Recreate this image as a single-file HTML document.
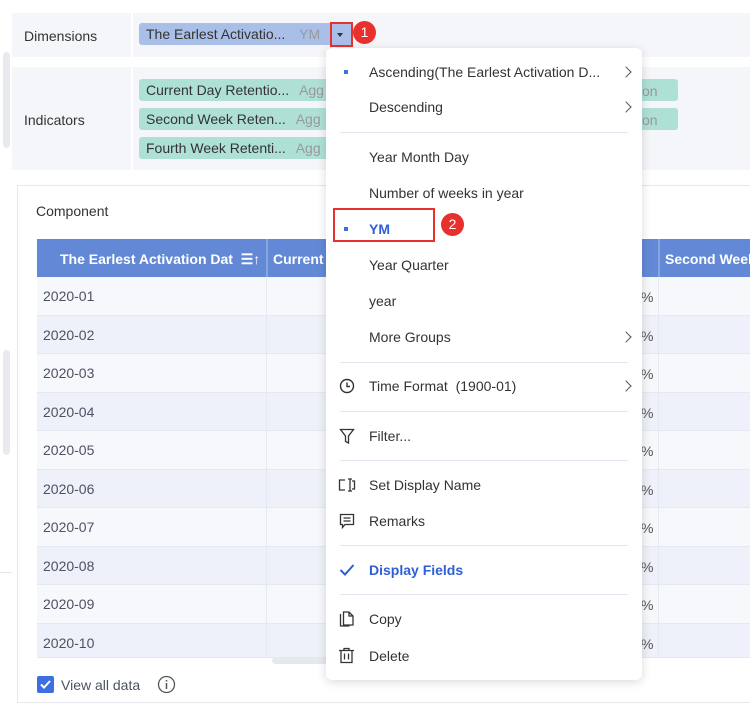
<!DOCTYPE html>
<html><head><meta charset="utf-8"><style>
*{box-sizing:border-box;margin:0;padding:0}
body{width:750px;height:708px;background:#fff;font-family:"Liberation Sans",Arial,sans-serif;font-size:14px;color:#333;position:relative;overflow:hidden}
.a{position:absolute}
.chip{position:absolute;height:22px;line-height:22px;padding-left:7px;font-size:14px;color:#333;border-radius:3px}
.g{color:#999}
.row{position:absolute;left:37px;width:713px;height:38.5px;line-height:38px;padding-left:6px;color:#4b5262;border-bottom:1px solid #e4e8f2}
.mi{position:absolute;left:369px;font-size:14px;color:#333;line-height:16px}
.sep{position:absolute;left:340px;width:288px;height:1px;background:#e3e6ee}
.chev{position:absolute;left:622px;width:8px;height:8px;border-right:1.3px solid #555;border-top:1.3px solid #555;transform:rotate(45deg)}
.badge{position:absolute;width:23px;height:23px;border-radius:50%;background:#e8302c;color:#fff;text-align:center;line-height:23px;font-size:14px}
.pc{position:absolute;left:641px;color:#555}
</style></head><body>
<div class="a" style="left:12px;top:13px;width:738px;height:44px;background:#f5f6fa"></div>
<div class="a" style="left:131px;top:13px;width:2px;height:44px;background:#fff"></div>
<div class="a" style="left:24px;top:28px">Dimensions</div>
<div class="chip" style="left:139px;top:23px;width:213px;background:#a9bfe8">The Earlest Activatio... <span class="g" style="margin-left:10px">YM</span></div>
<div class="a" style="left:330px;top:22px;width:23px;height:25px;border:2px solid #e8302c"></div>
<div class="a" style="left:337px;top:33px;width:0;height:0;border-left:3px solid transparent;border-right:3px solid transparent;border-top:4px solid #333"></div>
<div class="badge" style="left:353px;top:21px">1</div>
<div class="a" style="left:12px;top:67px;width:738px;height:103px;background:#f5f6fa"></div>
<div class="a" style="left:131px;top:67px;width:2px;height:103px;background:#fff"></div>
<div class="a" style="left:24px;top:112px">Indicators</div>
<div class="chip" style="left:139px;top:79px;width:539px;background:#aee0d6">Current Day Retentio... <span class="g" style="margin-left:6px">Agg</span></div>
<div class="chip" style="left:139px;top:108px;width:539px;background:#aee0d6">Second Week Reten... <span class="g" style="margin-left:6px">Agg</span></div>
<div class="chip" style="left:139px;top:137px;width:400px;background:#aee0d6">Fourth Week Retenti... <span class="g" style="margin-left:6px">Agg</span></div>
<div class="a g" style="left:642px;top:83px">on</div>
<div class="a g" style="left:642px;top:112px">on</div>
<div class="a" style="left:3px;top:52px;width:7px;height:96px;border-radius:4px;background:#e8eaef"></div>
<div class="a" style="left:3px;top:350px;width:7px;height:105px;border-radius:4px;background:#e8eaef"></div>
<div class="a" style="left:0;top:572px;width:12px;height:1px;background:#e3e6ee"></div>
<div class="a" style="left:17px;top:185px;width:740px;height:518px;border:1px solid #e6e8ee"></div>
<div class="a" style="left:36px;top:203px">Component</div>
<div class="a" style="left:37px;top:239px;width:713px;height:38px;background:#6389d6"></div>
<div class="a" style="left:266px;top:239px;width:2px;height:38px;background:#8aa6e2"></div>
<div class="a" style="left:658px;top:239px;width:2px;height:38px;background:#8aa6e2"></div>
<div class="a" style="left:60px;top:251px;color:#fff;font-weight:bold">The Earlest Activation Dat &nbsp;☰↑</div>
<div class="a" style="left:273px;top:251px;color:#fff;font-weight:bold">Current</div>
<div class="a" style="left:665px;top:251px;color:#fff;font-weight:bold;white-space:nowrap">Second Week</div>
<div class="row" style="top:277px;background:#f7f8fc">2020-01</div>
<div class="row" style="top:315.5px;background:#eef1f9">2020-02</div>
<div class="row" style="top:354px;background:#f7f8fc">2020-03</div>
<div class="row" style="top:392.5px;background:#eef1f9">2020-04</div>
<div class="row" style="top:431px;background:#f7f8fc">2020-05</div>
<div class="row" style="top:469.5px;background:#eef1f9">2020-06</div>
<div class="row" style="top:508px;background:#f7f8fc">2020-07</div>
<div class="row" style="top:546.5px;background:#eef1f9">2020-08</div>
<div class="row" style="top:585px;background:#f7f8fc">2020-09</div>
<div class="row" style="top:623.5px;background:#eef1f9;height:34px">2020-10</div>
<div class="a" style="left:266px;top:277px;width:1px;height:380px;background:#e4e8f2"></div>
<div class="a" style="left:658px;top:277px;width:1px;height:380px;background:#e4e8f2"></div>
<div class="pc" style="top:289px">%</div><div class="pc" style="top:328px">%</div><div class="pc" style="top:366px">%</div><div class="pc" style="top:405px">%</div><div class="pc" style="top:443px">%</div><div class="pc" style="top:482px">%</div><div class="pc" style="top:520px">%</div><div class="pc" style="top:559px">%</div><div class="pc" style="top:597px">%</div><div class="pc" style="top:636px">%</div>
<div class="a" style="left:272px;top:657px;width:60px;height:7px;border-radius:4px;background:#e6e8ee"></div>
<div class="a" style="left:37px;top:676px;width:17px;height:17px;border-radius:2px;background:#3d6fe0"></div>
<svg class="a" style="left:37px;top:676px" width="17" height="17"><path d="M4 8.5l3 3 6-6.5" stroke="#fff" stroke-width="2" fill="none"/></svg>
<div class="a" style="left:61px;top:677px;color:#4b5262">View all data</div>
<svg class="a" style="left:157px;top:675px" width="19" height="19"><circle cx="9.5" cy="9.5" r="8" stroke="#555" stroke-width="1.3" fill="none"/><path d="M9.5 8v6M9.5 5v1.5" stroke="#555" stroke-width="1.5"/></svg>
<div class="a" style="left:326px;top:48px;width:316px;height:632px;background:#fff;border-radius:6px;box-shadow:0 2px 10px rgba(0,0,0,.15)"></div>
<div class="a" style="left:344px;top:70px;width:4px;height:4px;background:#3d6fe0"></div>
<div class="mi" style="top:64px">Ascending(The Earlest Activation D...</div><div class="chev" style="top:68px"></div>
<div class="mi" style="top:99px">Descending</div><div class="chev" style="top:103px"></div>
<div class="sep" style="top:132px"></div>
<div class="mi" style="top:149px">Year Month Day</div>
<div class="mi" style="top:185px">Number of weeks in year</div>
<div class="a" style="left:344px;top:227px;width:4px;height:4px;background:#3d6fe0"></div>
<div class="mi" style="top:221px;color:#2d5fd8;font-weight:bold">YM</div>
<div class="a" style="left:333px;top:208px;width:102px;height:34px;border:2px solid #e8302c"></div>
<div class="badge" style="left:441px;top:213px">2</div>
<div class="mi" style="top:257px">Year Quarter</div>
<div class="mi" style="top:293px">year</div>
<div class="mi" style="top:329px">More Groups</div><div class="chev" style="top:333px"></div>
<div class="sep" style="top:362px"></div>
<svg class="a" style="left:339px;top:378px" width="16" height="16"><circle cx="8" cy="8" r="6.5" stroke="#333" stroke-width="1.4" fill="none"/><path d="M8 4.5V8.5H11" stroke="#333" stroke-width="1.4" fill="none"/></svg>
<div class="mi" style="top:378px">Time Format &nbsp;(1900-01)</div><div class="chev" style="top:382px"></div>
<div class="sep" style="top:411px"></div>
<svg class="a" style="left:339px;top:428px" width="16" height="16"><path d="M1.5 1.5h13l-5 6.5v7l-3-1.5v-5.5z" stroke="#333" stroke-width="1.3" fill="none"/></svg>
<div class="mi" style="top:428px">Filter...</div>
<div class="sep" style="top:460px"></div>
<svg class="a" style="left:338px;top:477px" width="18" height="16"><path d="M7 3H1.5v10H7M10 2h4M10 14h4M12 2v12M14 4h2.5v8H14" stroke="#333" stroke-width="1.3" fill="none"/></svg>
<div class="mi" style="top:477px">Set Display Name</div>
<svg class="a" style="left:339px;top:513px" width="16" height="17"><path d="M1.5 1.5h13v10H6l-2.5 3v-3h-2z M4.5 5h7M4.5 8h7" stroke="#333" stroke-width="1.3" fill="none"/></svg>
<div class="mi" style="top:513px">Remarks</div>
<div class="sep" style="top:545px"></div>
<svg class="a" style="left:339px;top:563px" width="16" height="14"><path d="M1.5 7l4.5 4.5L14.5 2" stroke="#2d5fd8" stroke-width="2" fill="none"/></svg>
<div class="mi" style="top:562px;color:#2d5fd8;font-weight:bold">Display Fields</div>
<div class="sep" style="top:594px"></div>
<svg class="a" style="left:339px;top:611px" width="16" height="17"><path d="M1.5 3v12h9M4.5 1h5.5l4 4v9H4.5z M10 1v4h4" stroke="#333" stroke-width="1.3" fill="none"/></svg>
<div class="mi" style="top:611px">Copy</div>
<svg class="a" style="left:338px;top:647px" width="17" height="17"><path d="M1 3.5h15M6 3.5V1.5h5v2M3 3.5v12h11v-12M6.5 6.5v6M10.5 6.5v6" stroke="#333" stroke-width="1.3" fill="none"/></svg>
<div class="mi" style="top:648px">Delete</div>
</body></html>
